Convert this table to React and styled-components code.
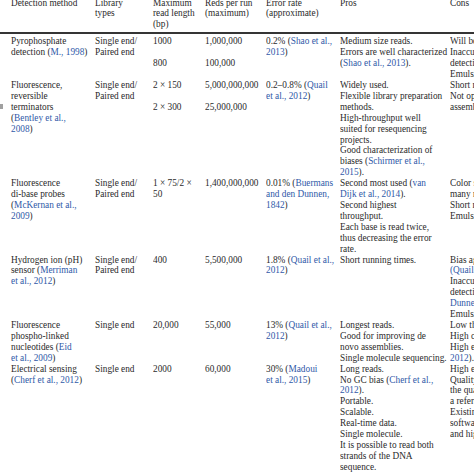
import React from "react";
import styled, { createGlobalStyle } from "styled-components";

const GlobalStyle = createGlobalStyle`
  html, body {
    margin: 0;
    padding: 0;
    background: #fff;
  }
  body {
    width: 474px;
    height: 474px;
    overflow: hidden;
  }
`;

const Page = styled.div`
  position: relative;
  width: 474px;
  height: 474px;
  overflow: hidden;
  background: #fff;
  font-family: "Liberation Serif", "Times New Roman", serif;
  font-size: 9.3px;
  line-height: 10.9px;
  color: #2a2a2a;

  /* stray mark from the neighbouring page column */
  &::before {
    content: "";
    position: absolute;
    left: 0;
    top: 104px;
    width: 3px;
    height: 5px;
    background: #a0a0a0;
  }
`;

const Table = styled.table`
  border-collapse: collapse;
  table-layout: fixed;
  width: 600px;
  margin-top: -2.5px;
`;

const Col = styled.col`
  width: ${(p) => p.$w}px;
`;

const HeadCell = styled.th`
  padding: 0 0 1.5px 0;
  text-align: left;
  vertical-align: top;
  font-weight: normal;
  white-space: nowrap;
  border-bottom: 2px solid #353535;
  &:first-child {
    padding-left: 11px;
  }
`;

const Row = styled.tr`
  &:first-child td {
    padding-top: 2.7px;
  }
`;

const Cell = styled.td`
  padding: 0;
  vertical-align: top;
  white-space: nowrap;
  overflow: hidden;
  &:first-child {
    padding-left: 11px;
  }
`;

const Line = styled.div`
  min-height: 10.9px;
`;

const Cite = styled.span`
  color: #2f59a8;
`;

// text in {braces} is a citation link
function renderLine(text) {
  return text.split(/\{([^}]*)\}/).map((part, i) =>
    i % 2 === 1 ? <Cite key={i}>{part}</Cite> : part
  );
}

const widths = [95, 58, 52, 61, 74, 110, 150];

const header = [
  ["Detection method"],
  ["Library", "types"],
  ["Maximum", "read length", "(bp)"],
  ["Reds per run", "(maximum)"],
  ["Error rate", "(approximate)"],
  ["Pros"],
  ["Cons"],
];

const rows = [
  [
    ["Pyrophosphate", "detection ({M., 1998})"],
    ["Single end/", "Paired end"],
    ["1000", "", "800"],
    ["1,000,000", "", "100,000"],
    ["0.2% ({Shao et al.,}", "{2013})"],
    ["Medium size reads.", "Errors are well characterized", "({Shao et al., 2013})."],
    ["Will be discontinued in 2016.", "Inaccurate homopolymer", "detection.", "Emulsion PCR."],
  ],
  [
    ["Fluorescence,", "reversible", "terminators", "({Bentley et al.,}", "{2008})"],
    ["Single end/", "Paired end"],
    ["2 × 150", "", "2 × 300"],
    ["5,000,000,000", "", "25,000,000"],
    ["0.2–0.8% ({Quail}", "{et al., 2012})"],
    [
      "Widely used.",
      "Flexible library preparation",
      "methods.",
      "High-throughput well",
      "suited for resequencing",
      "projects.",
      "Good characterization of",
      "biases ({Schirmer et al.,}",
      "{2015}).",
    ],
    ["Short reads.", "Not optimal for de novo", "assemblies."],
  ],
  [
    ["Fluorescence", "di-base probes", "({McKernan et al.,}", "{2009})"],
    ["Single end/", "Paired end"],
    ["1 × 75/2 ×", "50"],
    ["1,400,000,000"],
    ["0.01% ({Buermans}", "{and den Dunnen,}", "{1842})"],
    [
      "Second most used ({van}",
      "{Dijk et al., 2014}).",
      "Second highest",
      "throughput.",
      "Each base is read twice,",
      "thus decreasing the error",
      "rate.",
    ],
    ["Color space decoding,", "many reads discarded.", "Short reads.", "Emulsion PCR."],
  ],
  [
    ["Hydrogen ion (pH)", "sensor ({Merriman}", "{et al., 2012})"],
    ["Single end/", "Paired end"],
    ["400"],
    ["5,500,000"],
    ["1.8% ({Quail et al.,}", "{2012})"],
    ["Short running times."],
    [
      "Bias against AT-rich regions",
      "{(Quail et al., 2012)}.",
      "Inaccurate homopolymer",
      "detection (Buermans and den",
      "{Dunnen, 2014}).",
      "Emulsion PCR.",
    ],
  ],
  [
    ["Fluorescence", "phospho-linked", "nucleotides ({Eid}", "{et al., 2009})"],
    ["Single end"],
    ["20,000"],
    ["55,000"],
    ["13% ({Quail et al.,}", "{2012})"],
    ["Longest reads.", "Good for improving de", "novo assemblies.", "Single molecule sequencing."],
    ["Low throughput.", "High cost.", "High error rate ({Quail et al.,}", "{2012})."],
  ],
  [
    ["Electrical sensing", "({Cherf et al., 2012})"],
    ["Single end"],
    ["2000"],
    ["60,000"],
    ["30% ({Madoui}", "{et al., 2015})"],
    [
      "Long reads.",
      "No GC bias ({Cherf et al.,}",
      "{2012}).",
      "Portable.",
      "Scalable.",
      "Real-time data.",
      "Single molecule.",
      "It is possible to read both",
      "strands of the DNA",
      "sequence.",
    ],
    [
      "High error rate.",
      "Quality of the reads depends on",
      "the quality of the assembly of",
      "a reference.",
      "Existing bioinformatics",
      "software is immature",
      "and high error rates.",
    ],
  ],
];

function Lines({ lines }) {
  return lines.map((l, i) => (
    <Line key={i}>{l === "" ? "\u00a0" : renderLine(l)}</Line>
  ));
}

export default function App() {
  return (
    <Page>
      <GlobalStyle />
      <Table>
        <colgroup>
          {widths.map((w, i) => (
            <Col key={i} $w={w} />
          ))}
        </colgroup>
        <thead>
          <tr>
            {header.map((h, i) => (
              <HeadCell key={i}>
                <Lines lines={h} />
              </HeadCell>
            ))}
          </tr>
        </thead>
        <tbody>
          {rows.map((r, ri) => (
            <Row key={ri}>
              {r.map((c, ci) => (
                <Cell key={ci}>
                  <Lines lines={c} />
                </Cell>
              ))}
            </Row>
          ))}
        </tbody>
      </Table>
    </Page>
  );
}
